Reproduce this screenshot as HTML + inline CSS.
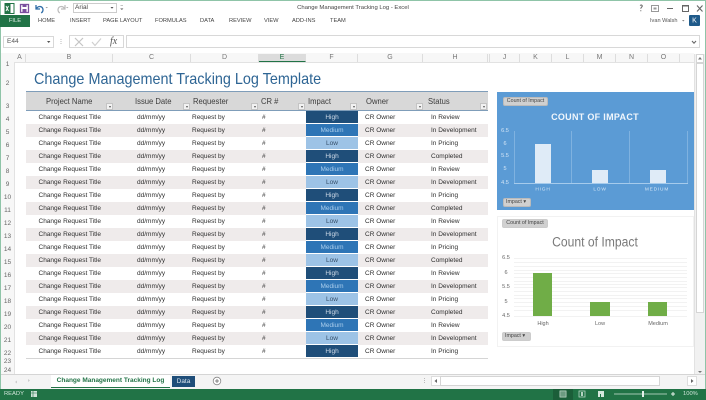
<!DOCTYPE html>
<html><head><meta charset="utf-8"><style>
html,body{margin:0;padding:0;background:#fff}
#r{position:relative;width:706px;height:400px;overflow:hidden;background:#fff;font-family:"Liberation Sans",sans-serif;color:#444;filter:blur(.35px)}
.a{position:absolute;white-space:nowrap}
.t{position:absolute;white-space:nowrap;transform:translate(-50%,-50%)}
.tab{position:absolute;top:16px;font-size:5.700px;color:#444;line-height:10px}
.ch{position:absolute;top:54px;height:8px;line-height:8px;font-size:7px;color:#777;text-align:center;border-right:1px solid #ddd;box-sizing:border-box}
.rn{position:absolute;left:1px;width:13px;text-align:center;font-size:6.5px;color:#666;line-height:8px;transform:translateY(-50%)}
table{position:absolute;left:26px;top:111px;border-collapse:separate;border-spacing:0;table-layout:fixed;width:462px;font-size:6.500px;color:#2f2f2f}
tr{height:13px}
td{height:13px;padding:0;line-height:13px;overflow:hidden;white-space:nowrap}
tr:nth-child(even){background:#efebeb}
td.b{padding-left:12.5px}td.c{padding-left:24px}td.d{padding-left:1px}td.e{padding-left:3px}
td.g{padding-left:7px}td.h{padding-left:8px}
td.f{text-align:center}
td.H{background:#1f4e79;color:#cfdbe8;box-shadow:inset 0 -1px #fff}td.M{background:#2e75b6;color:#a9cdec;box-shadow:inset 0 -1px #fff}td.L{background:#9dc3e6;color:#37506a;box-shadow:inset 0 -1px #fff}
.hd{position:absolute;top:101px;font-size:8.600px;color:#3c3c3c;transform:translateY(-50%) scaleX(.89);transform-origin:left center;white-space:nowrap}
.fb{position:absolute;top:103px;width:7px;height:7px;background:#f2f2f2;border:1px solid #c4c4c4;box-sizing:border-box}
.fb:after{content:"";position:absolute;left:1.5px;top:2px;border:1.5px solid transparent;border-top:2px solid #555;border-bottom:0}
.btn{position:absolute;background:#d0d0d0;border:1px solid #bbb;border-radius:2px;box-sizing:border-box;font-size:5.3px;color:#444;text-align:center;white-space:nowrap}
svg{position:absolute;left:0;top:0}
</style></head><body><div id="r">
<!-- window border -->
<div class="a" style="left:0;top:0;width:706px;height:1px;background:#8fc4a8"></div>
<div class="a" style="left:0;top:0;width:1px;height:400px;background:#8fc4a8"></div>
<div class="a" style="right:0;top:0;width:1px;height:400px;background:#8fc4a8"></div>

<!-- ribbon -->
<svg width="706" height="64" style="z-index:2">
<rect x="5" y="3.500" width="9" height="10" fill="#fff" stroke="#217346"/><rect x="4.500" y="3" width="6" height="10.500" fill="#217346"/><path d="M6 6l2.500 5M8.500 6L6 11" stroke="#fff" stroke-width=".9"/>
<rect x="20.500" y="4.500" width="8" height="8" fill="#fff" stroke="#7a4f9e" stroke-width="1.300"/><rect x="22.500" y="4.500" width="4" height="2.500" fill="#7a4f9e"/><rect x="22.500" y="9" width="4" height="3.500" fill="#7a4f9e"/>
<path d="M36 5v4h4M36.500 8.500c2-3 6-2.500 6.500 1 .1 1.500-.8 2.800-1.800 3.500" fill="none" stroke="#2f6ea8" stroke-width="1.300"/>
<path d="M45.500 7l1.200 1.300L48 7z" fill="#999"/>
<path d="M63 5v4h-4M62.500 8.500c-2-3-6-2.500-6.500 1-.1 1.500.8 2.800 1.800 3.500" fill="none" stroke="#bbb" stroke-width="1.200" transform="translate(2 0)"/>
<path d="M66 7l1.200 1.300L68.500 7z" fill="#aaa"/>
<rect x="73.500" y="3.500" width="43" height="9" fill="#fff" stroke="#ccc"/>
<path d="M110.500 7l1.500 1.700L113.500 7z" fill="#555"/>
<path d="M120.500 5.500h2.500M120.500 8.500l1.300 1.500 1.300-1.500z" fill="#888" stroke="#888" stroke-width=".5"/>
<!-- window controls -->
<path d="M640 5.500c2-1.300 3 .5 1.500 1.700-.7.6-.7 1-.7 1.600M640.800 10.200v1" fill="none" stroke="#666"/>
<rect x="651.500" y="5.500" width="7" height="6" fill="none" stroke="#999"/><rect x="653.500" y="7.500" width="3" height="2" fill="#999"/>
<rect x="667" y="8" width="6" height="1" fill="#666"/>
<rect x="682.500" y="5.500" width="6" height="6" fill="none" stroke="#666"/><rect x="682.500" y="5" width="6" height="1.500" fill="#666"/>
<path d="M697 5.500l5.500 6M702.500 5.500l-5.500 6" stroke="#666" stroke-width="1.100"/>
<rect x="689" y="15" width="11" height="11" rx="1" fill="#1f5a8a"/>
<path d="M682 20l1.300 1.500 1.300-1.500z" fill="#888"/>
<!-- formula bar -->
<rect x="3.500" y="36.500" width="50" height="11" fill="#fff" stroke="#d8d8d8"/>
<path d="M47 41l1.700 2 1.700-2z" fill="#555"/>
<path d="M61 39v6" stroke="#bbb" stroke-dasharray="1 1"/>
<rect x="69.500" y="35.500" width="54" height="12" fill="#fff" stroke="#d8d8d8"/>
<path d="M75 38l8 8M83 38l-8 8" stroke="#c4c4c4" stroke-width="1.200"/>
<path d="M92 42l3 3.500 6-7" fill="none" stroke="#d0d0d0" stroke-width="1.200"/>
<rect x="126.500" y="35.500" width="573" height="12" fill="#fff" stroke="#d8d8d8"/>
<path d="M696 41l2 2.200 2-2.200" fill="none" stroke="#666" stroke-width="1.100" transform="translate(-4 0)"/>
</svg>
<div class="a" style="left:0;top:15px;width:30px;height:12px;background:#217346;color:#dfeee6;font-size:5.800px;line-height:12px;text-align:center;z-index:3">FILE</div>
<div class="tab" style="left:38px">HOME</div>
<div class="tab" style="left:70px">INSERT</div>
<div class="tab" style="left:103px">PAGE LAYOUT</div>
<div class="tab" style="left:155px">FORMULAS</div>
<div class="tab" style="left:200px">DATA</div>
<div class="tab" style="left:229px">REVIEW</div>
<div class="tab" style="left:264px">VIEW</div>
<div class="tab" style="left:292px">ADD-INS</div>
<div class="tab" style="left:330px">TEAM</div>
<div class="a" style="left:74px;top:3px;font-size:6.5px;line-height:10px;color:#444;padding-left:1px;z-index:3">Arial</div>
<div class="t" style="left:353px;top:8px;font-size:5.900px;color:#444">Change Management Tracking Log - Excel</div>
<div class="a" style="left:650px;top:16px;font-size:5.600px;line-height:10px;color:#555">Ivan Walsh</div>
<div class="t" style="left:694.500px;top:20.500px;font-size:7px;color:#fff;z-index:4">K</div>
<div class="a" style="left:7px;top:37px;font-size:6.5px;line-height:10px;color:#555;z-index:3">E44</div>
<div class="a" style="left:110px;top:35px;font:italic 10px 'Liberation Serif',serif;line-height:13px;color:#555;z-index:3">fx</div>

<!-- column headers -->
<div class="a" style="left:1px;top:53px;width:693px;height:9px;background:#f7f7f7"></div>
<div class="ch" style="left:14px;width:12px">A</div>
<div class="ch" style="left:26px;width:87px">B</div>
<div class="ch" style="left:113px;width:78px">C</div>
<div class="ch" style="left:191px;width:68px">D</div>
<div class="ch" style="left:259px;width:47px;background:#dcdcdc;border-bottom:1px solid #217346;color:#217346">E</div>
<div class="ch" style="left:306px;width:52px">F</div>
<div class="ch" style="left:358px;width:65px">G</div>
<div class="ch" style="left:423px;width:65px">H</div>
<div class="ch" style="left:488px;width:2px"></div>
<div class="ch" style="left:490px;width:30px">J</div>
<div class="ch" style="left:520px;width:32px">K</div>
<div class="ch" style="left:552px;width:32px">L</div>
<div class="ch" style="left:584px;width:32px">M</div>
<div class="ch" style="left:616px;width:32px">N</div>
<div class="ch" style="left:648px;width:32px">O</div>
<div class="a" style="left:1px;top:62px;width:693px;height:1px;background:#e2e2e2"></div>

<!-- row headers -->
<div class="a" style="left:1px;top:62px;width:13px;height:313px;background:#f7f7f7;border-right:1px solid #e2e2e2"></div>
<div class="rn" style="top:65px">1</div><div class="rn" style="top:84px">2</div><div class="rn" style="top:106.500px">3</div>
<div class="rn" style="top:120px">4</div><div class="rn" style="top:133px">5</div><div class="rn" style="top:146px">6</div><div class="rn" style="top:159px">7</div><div class="rn" style="top:172px">8</div><div class="rn" style="top:185px">9</div><div class="rn" style="top:198px">10</div><div class="rn" style="top:211px">11</div><div class="rn" style="top:224px">12</div><div class="rn" style="top:237px">13</div><div class="rn" style="top:250px">14</div><div class="rn" style="top:263px">15</div><div class="rn" style="top:276px">16</div><div class="rn" style="top:289px">17</div><div class="rn" style="top:302px">18</div><div class="rn" style="top:315px">19</div><div class="rn" style="top:328px">20</div><div class="rn" style="top:341px">21</div><div class="rn" style="top:354px">22</div><div class="rn" style="top:362px">23</div><div class="rn" style="top:371px">24</div>

<!-- title -->
<div class="a" style="left:34px;top:70px;font-size:16px;line-height:20px;color:#2e6594;transform:scaleX(.9);transform-origin:left center">Change Management Tracking Log Template</div>

<!-- header band -->
<div class="a" style="left:26px;top:91px;width:462px;height:20px;background:#d8d8d8;border-top:1px solid #7f9db9;border-bottom:1px solid #7f9db9;box-sizing:border-box"></div>
<div class="hd" style="left:46px">Project Name</div>
<div class="hd" style="left:135px">Issue Date</div>
<div class="hd" style="left:192.500px">Requester</div>
<div class="hd" style="left:261px">CR #</div>
<div class="hd" style="left:307.500px">Impact</div>
<div class="hd" style="left:365.500px">Owner</div>
<div class="hd" style="left:428px">Status</div>
<div class="fb" style="left:106px"></div><div class="fb" style="left:183px"></div><div class="fb" style="left:251px"></div><div class="fb" style="left:298px"></div><div class="fb" style="left:350px"></div><div class="fb" style="left:416px"></div><div class="fb" style="left:480px"></div>

<table>
<colgroup><col style="width:87px"><col style="width:78px"><col style="width:68px"><col style="width:47px"><col style="width:52px"><col style="width:65px"><col style="width:65px"></colgroup>
<tr><td class="b">Change Request Title</td><td class="c">dd/mm/yy</td><td class="d">Request by</td><td class="e">#</td><td class="f H">High</td><td class="g">CR Owner</td><td class="h">In Review</td></tr>
<tr><td class="b">Change Request Title</td><td class="c">dd/mm/yy</td><td class="d">Request by</td><td class="e">#</td><td class="f M">Medium</td><td class="g">CR Owner</td><td class="h">In Development</td></tr>
<tr><td class="b">Change Request Title</td><td class="c">dd/mm/yy</td><td class="d">Request by</td><td class="e">#</td><td class="f L">Low</td><td class="g">CR Owner</td><td class="h">In Pricing</td></tr>
<tr><td class="b">Change Request Title</td><td class="c">dd/mm/yy</td><td class="d">Request by</td><td class="e">#</td><td class="f H">High</td><td class="g">CR Owner</td><td class="h">Completed</td></tr>
<tr><td class="b">Change Request Title</td><td class="c">dd/mm/yy</td><td class="d">Request by</td><td class="e">#</td><td class="f M">Medium</td><td class="g">CR Owner</td><td class="h">In Review</td></tr>
<tr><td class="b">Change Request Title</td><td class="c">dd/mm/yy</td><td class="d">Request by</td><td class="e">#</td><td class="f L">Low</td><td class="g">CR Owner</td><td class="h">In Development</td></tr>
<tr><td class="b">Change Request Title</td><td class="c">dd/mm/yy</td><td class="d">Request by</td><td class="e">#</td><td class="f H">High</td><td class="g">CR Owner</td><td class="h">In Pricing</td></tr>
<tr><td class="b">Change Request Title</td><td class="c">dd/mm/yy</td><td class="d">Request by</td><td class="e">#</td><td class="f M">Medium</td><td class="g">CR Owner</td><td class="h">Completed</td></tr>
<tr><td class="b">Change Request Title</td><td class="c">dd/mm/yy</td><td class="d">Request by</td><td class="e">#</td><td class="f L">Low</td><td class="g">CR Owner</td><td class="h">In Review</td></tr>
<tr><td class="b">Change Request Title</td><td class="c">dd/mm/yy</td><td class="d">Request by</td><td class="e">#</td><td class="f H">High</td><td class="g">CR Owner</td><td class="h">In Development</td></tr>
<tr><td class="b">Change Request Title</td><td class="c">dd/mm/yy</td><td class="d">Request by</td><td class="e">#</td><td class="f M">Medium</td><td class="g">CR Owner</td><td class="h">In Pricing</td></tr>
<tr><td class="b">Change Request Title</td><td class="c">dd/mm/yy</td><td class="d">Request by</td><td class="e">#</td><td class="f L">Low</td><td class="g">CR Owner</td><td class="h">Completed</td></tr>
<tr><td class="b">Change Request Title</td><td class="c">dd/mm/yy</td><td class="d">Request by</td><td class="e">#</td><td class="f H">High</td><td class="g">CR Owner</td><td class="h">In Review</td></tr>
<tr><td class="b">Change Request Title</td><td class="c">dd/mm/yy</td><td class="d">Request by</td><td class="e">#</td><td class="f M">Medium</td><td class="g">CR Owner</td><td class="h">In Development</td></tr>
<tr><td class="b">Change Request Title</td><td class="c">dd/mm/yy</td><td class="d">Request by</td><td class="e">#</td><td class="f L">Low</td><td class="g">CR Owner</td><td class="h">In Pricing</td></tr>
<tr><td class="b">Change Request Title</td><td class="c">dd/mm/yy</td><td class="d">Request by</td><td class="e">#</td><td class="f H">High</td><td class="g">CR Owner</td><td class="h">Completed</td></tr>
<tr><td class="b">Change Request Title</td><td class="c">dd/mm/yy</td><td class="d">Request by</td><td class="e">#</td><td class="f M">Medium</td><td class="g">CR Owner</td><td class="h">In Review</td></tr>
<tr><td class="b">Change Request Title</td><td class="c">dd/mm/yy</td><td class="d">Request by</td><td class="e">#</td><td class="f L">Low</td><td class="g">CR Owner</td><td class="h">In Development</td></tr>
<tr><td class="b">Change Request Title</td><td class="c">dd/mm/yy</td><td class="d">Request by</td><td class="e">#</td><td class="f H">High</td><td class="g">CR Owner</td><td class="h">In Pricing</td></tr>
</table>
<div class="a" style="left:26px;top:358px;width:462px;height:1px;background:#d5d5d5"></div>

<!-- chart 1 -->
<div class="a" style="left:497px;top:92px;width:197px;height:118px;background:#5b9bd5"></div>
<svg width="706" height="400" style="pointer-events:none">
<path d="M514.500 131v52M571.500 131v52M629.500 131v52M687.500 131v52" stroke="#7fb2e0"/>
<path d="M514 183.500h174" stroke="#a6cbec"/>
<rect x="535" y="144" width="16" height="39" fill="#dfebf7"/>
<rect x="592" y="170" width="16" height="13" fill="#dfebf7"/>
<rect x="650" y="170" width="16" height="13" fill="#dfebf7"/>
<!-- chart 2 -->
<rect x="497.500" y="216.500" width="196" height="130" fill="#fff" stroke="#e4e4e4" stroke-dasharray="1 1"/>
<path d="M514 258.500h173M514 262.500h173M514 266.500h173M514 270.500h173M514 273.500h173M514 277.500h173M514 281.500h173M514 284.500h173M514 287.500h173M514 291.500h173M514 295.500h173M514 298.500h173M514 302.500h173M514 306.500h173M514 310.500h173M514 316.500h173" stroke="#f2f2f2"/>
<rect x="533" y="273" width="19" height="43" fill="#70ad47"/>
<rect x="590" y="302" width="20" height="14" fill="#70ad47"/>
<rect x="648" y="302" width="19" height="14" fill="#70ad47"/>
</svg>
<div class="btn" style="left:503px;top:97px;width:45px;height:9px;line-height:7px">Count of Impact</div>
<div class="t" style="left:595px;top:117px;font-size:9px;font-weight:bold;color:#f0f6fc;letter-spacing:.3px">COUNT OF IMPACT</div>
<div class="t" style="left:505px;top:131px;font-size:5.500px;color:#d5e6f6">6.5</div>
<div class="t" style="left:505px;top:144px;font-size:5.500px;color:#d5e6f6">6</div>
<div class="t" style="left:505px;top:156px;font-size:5.500px;color:#d5e6f6">5.5</div>
<div class="t" style="left:505px;top:169px;font-size:5.500px;color:#d5e6f6">5</div>
<div class="t" style="left:505px;top:183px;font-size:5.500px;color:#d5e6f6">4.5</div>
<div class="t" style="left:543px;top:190px;font-size:4.800px;color:#d5e6f6;letter-spacing:.8px">HIGH</div>
<div class="t" style="left:600px;top:190px;font-size:4.800px;color:#d5e6f6;letter-spacing:.8px">LOW</div>
<div class="t" style="left:657px;top:190px;font-size:4.800px;color:#d5e6f6;letter-spacing:.8px">MEDIUM</div>
<div class="btn" style="left:503px;top:198px;width:28px;height:9px;line-height:7px;text-align:left;padding-left:2px">Impact &#9662;</div>

<div class="btn" style="left:502px;top:219px;width:46px;height:9px;line-height:7px;border-color:#ccc">Count of Impact</div>
<div class="t" style="left:595px;top:242px;font-size:13.500px;color:#7a7a7a;transform:translate(-50%,-50%) scaleX(.9)">Count of Impact</div>
<div class="t" style="left:506px;top:258px;font-size:5.500px;color:#666">6.5</div>
<div class="t" style="left:506px;top:273px;font-size:5.500px;color:#666">6</div>
<div class="t" style="left:506px;top:287px;font-size:5.500px;color:#666">5.5</div>
<div class="t" style="left:506px;top:302px;font-size:5.500px;color:#666">5</div>
<div class="t" style="left:506px;top:316px;font-size:5.500px;color:#666">4.5</div>
<div class="t" style="left:543px;top:324px;font-size:5.500px;color:#666">High</div>
<div class="t" style="left:600px;top:324px;font-size:5.500px;color:#666">Low</div>
<div class="t" style="left:658px;top:324px;font-size:5.500px;color:#666">Medium</div>
<div class="btn" style="left:502px;top:332px;width:29px;height:9px;line-height:7px;text-align:left;padding-left:2px;border-color:#ccc">Impact &#9662;</div>

<!-- vertical scrollbar -->
<div class="a" style="left:694px;top:54px;width:11px;height:321px;background:#f1f1f1;border-left:1px solid #e2e2e2;box-sizing:border-box"></div>
<div class="a" style="left:696px;top:63px;width:8px;height:250px;background:#fff;border:1px solid #d5d5d5;box-sizing:border-box"></div>
<div class="a" style="left:696px;top:54px;width:8px;height:9px;background:#fff;border:1px solid #d5d5d5;box-sizing:border-box"></div>
<div class="a" style="left:1px;top:375px;width:704px;height:14px;background:#f4f4f4"></div>
<svg width="706" height="400">
<path d="M700 57l-2 2.500h4z" fill="#777"/>
<path d="M700 373l-2-2h4z" fill="#777"/>
<circle cx="217" cy="381" r="3.800" fill="#fff" stroke="#888" stroke-width=".8"/><path d="M215 381h4M217 379v4" stroke="#666" stroke-width=".8"/>
<path d="M17 381l-2 1.500 2 1.500zM28 379.500l2 1.500-2 1.500z" fill="#ccc" transform="translate(0 -.5)"/>
<path d="M424.500 378v6" stroke="#bbb" stroke-dasharray="1 1"/>
<rect x="431.500" y="376.500" width="9" height="9" fill="#fff" stroke="#ddd"/><path d="M437 379l-2.500 2 2.500 2z" fill="#666"/>
<rect x="440.500" y="376.500" width="219" height="9" fill="#fff" stroke="#d5d5d5"/>
<rect x="687.500" y="376.500" width="9" height="9" fill="#fff" stroke="#ddd"/><path d="M691 379l2.500 2-2.500 2z" fill="#666"/>
</svg>

<!-- sheet tabs -->
<div class="a" style="left:1px;top:374px;width:704px;height:1px;background:#d5d5d5"></div>
<div class="a" style="left:51px;top:375px;width:119px;height:13px;background:#fff;border-bottom:1px solid #217346;box-sizing:border-box;text-align:center;font-size:6.500px;font-weight:bold;line-height:12px;color:#217346">Change Management Tracking Log</div>
<div class="a" style="left:172px;top:376px;width:23px;height:11px;background:#1f4e79;color:#dde6ef;text-align:center;font-size:6.500px;line-height:11px">Data</div>

<!-- status bar -->
<div class="a" style="left:0;top:389px;width:706px;height:11px;background:#217346"></div>
<div class="a" style="left:4px;top:390px;font-size:5.800px;line-height:9px;color:#cfe3d8">READY</div>
<svg width="706" height="400">
<rect x="31" y="391" width="6" height="6" fill="#cfe3d8"/><path d="M31 393h6M33 391v6" stroke="#217346" stroke-width=".6"/>
<rect x="553" y="389" width="20" height="11" fill="#1b5e39"/>
<rect x="560" y="391" width="6" height="6" fill="none" stroke="#d6e8de" stroke-width=".8"/><path d="M560 393h6M560 395h6M562 391v6M564 391v6" stroke="#d6e8de" stroke-width=".5"/>
<rect x="579" y="391" width="6" height="6" fill="none" stroke="#b5d3c2" stroke-width=".8"/><rect x="581" y="392" width="2" height="4" fill="#b5d3c2"/>
<rect x="598" y="391" width="6" height="6" fill="#d6e8de"/><rect x="600" y="394" width="1" height="3" fill="#217346"/>
<path d="M614 394h3M617 394h50" stroke="#cfe3d8" stroke-width=".7"/>
<rect x="642" y="391" width="2" height="6" fill="#e6f1eb"/>
<path d="M671 394h4M673 392v4" stroke="#e6f1eb" stroke-width="1"/>
</svg>
<div class="a" style="left:683px;top:390px;font-size:5.800px;line-height:9px;color:#cfe3d8">100%</div>
</div></body></html>
